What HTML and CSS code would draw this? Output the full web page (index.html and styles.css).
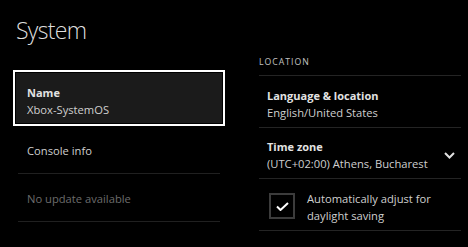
FILE: index.html
```html
<!DOCTYPE html>
<html lang="en">
  <head>
    <meta charset="UTF-8" />
    <meta name="viewport" content="width=device-width, initial-scale=1.0" />
    <title>System</title>
    <link rel="stylesheet" href="styles.css">
  </head>
  <body>
    <h1 class="title">System</h1>

    <div class="columns">
      <div class="menu">
        <div class="menu-item focused">
          <div class="item-label">Name</div>
          <div class="item-value">Xbox-SystemOS</div>
        </div>
        <div class="menu-item">
          <div class="item-value">Console info</div>
        </div>
        <div class="menu-item muted">
          <div class="item-value">No update available</div>
        </div>
      </div>

      <div class="settings">
        <div class="section-label">LOCATION</div>

        <div class="setting">
          <div>
            <div class="item-label">Language &amp; location</div>
            <div class="item-value">English/United States</div>
          </div>
        </div>

        <div class="setting">
          <div>
            <div class="item-label">Time zone</div>
            <div class="item-value">(UTC+02:00) Athens, Bucharest</div>
          </div>
          <svg class="chevron" width="11" height="7" viewBox="0 0 11 7">
            <polyline points="1,1 5.5,5.5 10,1" fill="none" stroke="#e0e0e0" stroke-width="2" />
          </svg>
        </div>

        <div class="setting check-row">
          <div class="checkbox">
            <svg width="13" height="9" viewBox="0 0 13 9">
              <polyline points="1,4.5 4.5,8 12,1" fill="none" stroke="#fff" stroke-width="2" />
            </svg>
          </div>
          <div class="item-value">Automatically adjust for<br />daylight saving</div>
        </div>
      </div>
    </div>
  </body>
</html>
```

FILE: styles.css
```css
* {
  margin: 0;
  padding: 0;
  box-sizing: border-box;
}

body {
  background-color: #000;
  font-family: "Open Sans", "Noto Sans", sans-serif;
  color: #c8c8c8;
  width: 468px;
  height: 247px;
  overflow: hidden;
}

.title {
  height: 52px;
  padding: 14px 0 0 16px;
  font-size: 23px;
  line-height: 32px;
  font-weight: 300;
  color: #dedede;
  letter-spacing: -0.7px;
}

.columns {
  display: flex;
  gap: 39px;
  padding-left: 18px;
}

.menu {
  width: 202px;
  padding-top: 18px;
}

.settings {
  width: 202px;
}

.item-label {
  font-size: 11px;
  line-height: 17px;
  font-weight: 700;
  color: #e2e2e2;
}

.item-value {
  font-size: 11.2px;
  line-height: 17px;
  color: #cfcfcf;
}

.menu-item {
  height: 48px;
  padding: 16px 0 0 9px;
  border-bottom: 1px solid #202020;
}

.menu-item.focused {
  height: 56px;
  margin: 0 -5px;
  padding: 12px 0 0 12px;
  border: 2px solid #fff;
  background-color: #1b1b1b;
  box-shadow: inset 0 0 0 1px #000;
}

.menu-item.muted .item-value {
  color: #6c6c6c;
}

.section-label {
  padding: 4px 0 7px 0;
  font-size: 8.7px;
  line-height: 12px;
  letter-spacing: 1px;
  color: #c0c0c0;
  border-bottom: 1px solid #242424;
}

.setting {
  display: flex;
  justify-content: space-between;
  align-items: center;
  padding: 11px 6px 6px 8px;
  border-bottom: 1px solid #242424;
}

.setting:nth-child(3) {
  padding-top: 10px;
}

.chevron {
  display: block;
}

.check-row {
  justify-content: flex-start;
  align-items: flex-start;
  gap: 12px;
  padding-left: 10px;
}

.checkbox {
  width: 26px;
  height: 26px;
  margin-top: 3px;
  border: 2px solid #3c3c3c;
  display: flex;
  justify-content: center;
  align-items: center;
}

.checkbox svg {
  display: block;
}
```
